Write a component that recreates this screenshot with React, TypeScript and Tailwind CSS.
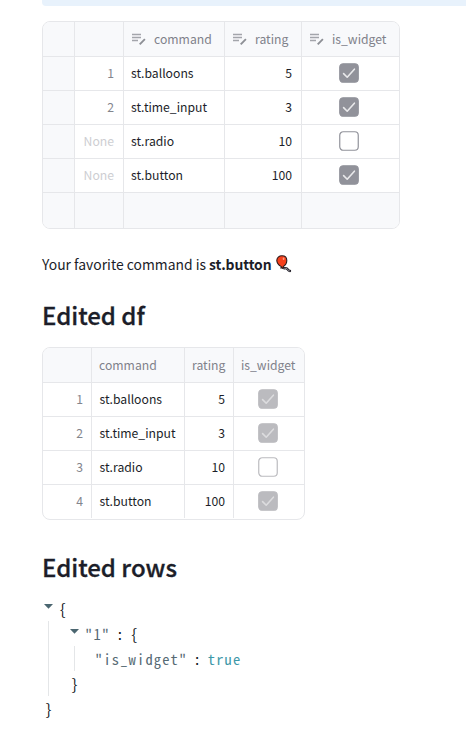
import type { ReactNode } from 'react';
import clsx from 'clsx';

interface Row {
    index: string;
    command: string;
    rating: number;
    isWidget: boolean;
}

const editorRows: Row[] = [
    { index: '1', command: 'st.balloons', rating: 5, isWidget: true },
    { index: '2', command: 'st.time_input', rating: 3, isWidget: true },
    { index: 'None', command: 'st.radio', rating: 10, isWidget: false },
    { index: 'None', command: 'st.button', rating: 100, isWidget: true },
];

const editedRows: Row[] = editorRows.map((row, i) => ({ ...row, index: String(i + 1) }));

function EditIcon() {
    return (
        <svg width="15" height="13" viewBox="0 0 15 13" className="shrink-0">
            <path d="M0 1.5h9M0 4.5h9M0 7.5h6" stroke="#a3a5ab" strokeWidth="1.5" />
            <path d="M7.7 11.3l5.2-5.2" stroke="#8d8f95" strokeWidth="1.9" />
        </svg>
    );
}

function Checkbox({ checked, muted }: { checked: boolean; muted?: boolean }) {
    const color = muted ? '#bbbbbf' : '#91929a';
    return (
        <svg width="20" height="20" viewBox="0 0 20 20">
            <rect x="0.75" y="0.75" width="18.5" height="18.5" rx="3.5" fill={checked ? color : '#ffffff'} stroke={color} strokeWidth="1.2" />
            {checked && (
                <path
                    d="M4.6 10.6l3.6 3.6 7.2-8"
                    fill="none"
                    stroke={muted ? '#dcdcde' : '#e9e9eb'}
                    strokeWidth="1.6"
                    strokeLinecap="round"
                    strokeLinejoin="round"
                />
            )}
        </svg>
    );
}

function Balloon() {
    return (
        <svg width="16" height="18" viewBox="0 0 16 18" className="ml-1 shrink-0">
            <path d="M6.4 12.2c.6 1.6 2 .8 3.6 1 2 .2 1.4 2.6 4 2.8" fill="none" stroke="#23202a" strokeWidth="2.4" strokeLinecap="round" />
            <path d="M7 12.9c.8.8 1.8.3 3 .4 2 .2 1.4 2.5 3.8 2.7" fill="none" stroke="#b9b9bd" strokeWidth="0.7" />
            <path d="M6 .8c3 0 4.8 2 4.8 4.6 0 2.5-1.6 4.8-3.6 6.2l.5 1.3H4.9l.4-1.3C2.6 10 .8 8 .8 5.400.8 2.8 3 .8 6 .8z" fill="#f5401c" stroke="#29181a" strokeWidth="1.1" />
            <ellipse cx="7.6" cy="3.7" rx="0.9" ry="1.2" fill="#ff9f86" />
        </svg>
    );
}

function Cell({ className, children }: { className?: string; children?: ReactNode }) {
    return <div className={clsx('flex items-center border-r border-[#e6e7ea] last:border-r-0', className)}>{children}</div>;
}

function DataEditor() {
    const grid = 'grid grid-cols-[32px_49px_101px_77px_97px] border-b border-[#e6e7ea]';

    return (
        <div className="mt-[15px] w-[358px] overflow-hidden rounded-lg border border-[#e6e7ea] text-[12.2px]">
            <div className={clsx(grid, 'h-[35px] bg-[#f8f9fb] text-[#7f818a]')}>
                <Cell />
                <Cell />
                {['command', 'rating', 'is_widget'].map((name) => (
                    <Cell key={name} className="gap-[7px] pl-2">
                        <EditIcon />
                        <span>{name}</span>
                    </Cell>
                ))}
            </div>
            {editorRows.map((row) => (
                <div key={row.command} className={clsx(grid, 'h-[34px]')}>
                    <Cell className="bg-[#f8f9fb]" />
                    <Cell className={clsx('justify-end pr-[9px]', row.index === 'None' ? 'text-[#cdced2]' : 'text-[#83858d]')}>{row.index}</Cell>
                    <Cell className="pl-[7px]">{row.command}</Cell>
                    <Cell className="justify-end pr-[9px]">{row.rating}</Cell>
                    <Cell className="justify-center pr-[3px] pb-px">
                        <Checkbox checked={row.isWidget} />
                    </Cell>
                </div>
            ))}
            <div className={clsx(grid, 'h-[35px] border-b-0 bg-[#f8f9fb]')}>
                {[0, 1, 2, 3, 4].map((i) => (
                    <Cell key={i} />
                ))}
            </div>
        </div>
    );
}

function DataFrame() {
    const grid = 'grid grid-cols-[49px_93px_49px_70px] border-b border-[#e6e7ea] last:border-transparent';

    return (
        <div className="mt-[14px] w-[263px] overflow-hidden rounded-lg border border-[#e6e7ea] text-[12.2px]">
            <div className={clsx(grid, 'h-[35px] bg-[#f8f9fb] text-[#7f818a]')}>
                <Cell />
                {['command', 'rating', 'is_widget'].map((name) => (
                    <Cell key={name} className="pl-[7px]">
                        {name}
                    </Cell>
                ))}
            </div>
            {editedRows.map((row) => (
                <div key={row.index} className={clsx(grid, 'h-[34px]')}>
                    <Cell className="justify-end pr-2 text-[#83858d]">{row.index}</Cell>
                    <Cell className="pl-[7.5px]">{row.command}</Cell>
                    <Cell className="justify-end pr-2">{row.rating}</Cell>
                    <Cell className="justify-center pr-0.5 pb-px">
                        <Checkbox checked={row.isWidget} muted />
                    </Cell>
                </div>
            ))}
        </div>
    );
}

function Caret() {
    return (
        <svg width="9" height="5" viewBox="0 0 9 5" className="mb-[5px] shrink-0">
            <path d="M0 0h9L4.5 4.7z" fill="#4b6670" />
        </svg>
    );
}

function JsonView() {
    return (
        <div className="mt-[11px] font-['Noto_Sans_Mono_CJK_SC','Liberation_Mono',monospace] text-[14.5px] leading-[25px] tracking-[1.15px] text-[#0b1016]">
            <div className="flex h-[25px] items-center pl-0.5">
                <Caret />
                <span className="ml-[6px]">{'{'}</span>
            </div>
            <div className="ml-1.5 h-[75px] border-l border-[#e4e6e8] pl-[21px]">
                <div className="flex h-[25px] items-center">
                    <Caret />
                    <span className="ml-[6px] text-[#566a74]">"1"</span>
                    <span className="ml-[6px]">:</span>
                    <span className="ml-[6px]">{'{'}</span>
                </div>
                <div className="ml-1 flex h-[25px] items-center border-l border-[#e4e6e8] pl-5">
                    <span className="text-[#566a74]">"is_widget"</span>
                    <span className="ml-[6px]">:</span>
                    <span className="ml-[6px] text-[#3d98a8]">true</span>
                </div>
                <div className="h-[25px] pl-px">{'}'}</div>
            </div>
            <div className="h-[25px] pl-[3px]">{'}'}</div>
        </div>
    );
}

export default function App() {
    return (
        <main className="h-[750px] w-[466px] overflow-hidden bg-white pl-[42px] font-['Noto_Sans_CJK_SC',sans-serif] text-[#1c1e29]">
            <div className="h-1.5 rounded-bl bg-[#e8f2fc]" />
            <DataEditor />
            <p className="mt-[23px] flex h-6 items-center text-[13.9px] leading-6">
                <span>
                    Your favorite command is <strong className="-tracking-[0.1px]">st.button</strong>
                </span>
                <Balloon />
            </p>
            <h3 className="mt-[21px] h-[36px] text-[24px] leading-9 font-medium [-webkit-text-stroke:0.3px]">Edited df</h3>
            <DataFrame />
            <h3 className="mt-[29px] h-[36px] text-[24px] leading-9 font-medium [-webkit-text-stroke:0.3px]">Edited rows</h3>
            <JsonView />
        </main>
    );
}
